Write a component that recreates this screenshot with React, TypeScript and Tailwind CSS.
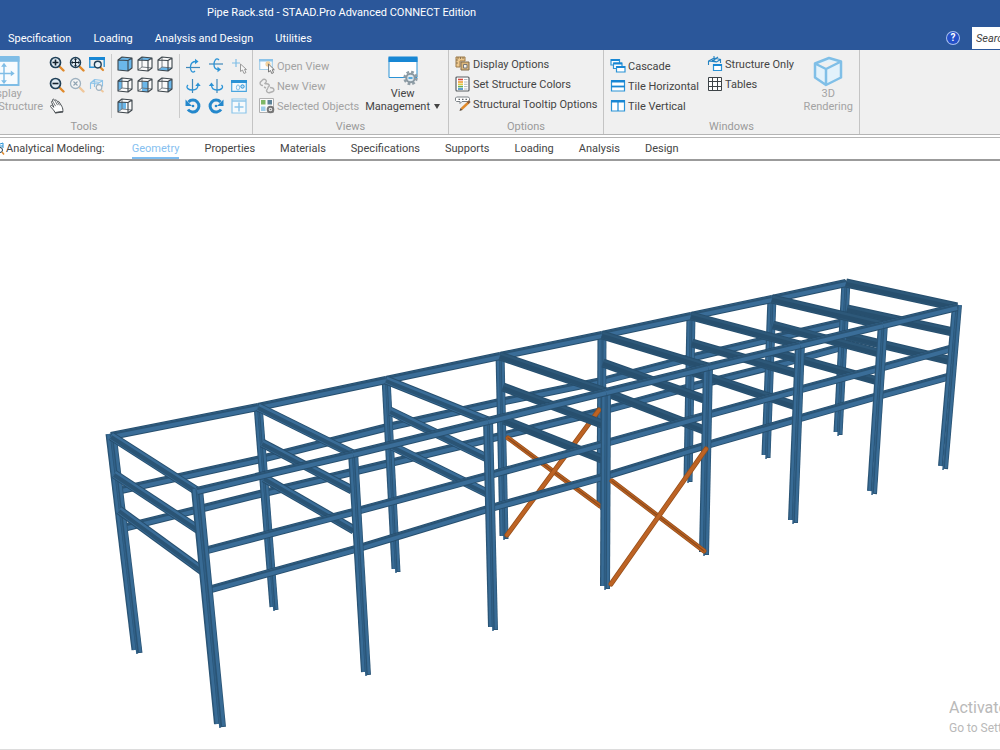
import type { ReactNode } from "react";

type Point = [number, number];

const BLUE = "#2b93d6";
const PALE = "#7fbde6";
const INK = "#3d4347";
const ORANGE = "#e08a2c";

/** 16px icon frame shared by the small ribbon commands. */
function Icon({ children }: { children: ReactNode }) {
  return (
    <svg viewBox="0 0 16 16" fill="none" aria-hidden="true" className="h-4 w-4 shrink-0">
      {children}
    </svg>
  );
}

function Magnifier({ sign, faded = false }: { sign: string; faded?: boolean }) {
  return (
    <Icon>
      <path
        d="M11 11l3.500 3.500"
        stroke={faded ? "#f0c79a" : ORANGE}
        strokeWidth="2.4"
        strokeLinecap="round"
      />
      <circle
        cx="6.5"
        cy="6.5"
        r="5"
        fill={faded ? "#f4f4f4" : "#dfeaf2"}
        stroke={faded ? "#9fb2c0" : "#1f3f57"}
        strokeWidth={faded ? 1.3 : 1.7}
      />
      <path d={sign} stroke={faded ? "#8fa3b2" : "#14222e"} strokeWidth={faded ? 1.1 : 1.6} />
    </Icon>
  );
}

function ZoomWindowIcon() {
  return (
    <Icon>
      <path d="M.8 2v9.2h5M15.2 2v9" stroke={BLUE} strokeWidth="1.4" />
      <path d="M0 1h16v3H0z" fill="#1887d4" />
      <path d="M11.5 11.5L14 14" stroke={ORANGE} strokeWidth="2.2" strokeLinecap="round" />
      <circle cx="8.8" cy="8.6" r="3.4" fill="#eaf3f9" stroke="#1f3f57" strokeWidth="1.4" />
    </Icon>
  );
}

function FrameZoomIcon() {
  return (
    <Icon>
      <path
        d="M1.500 12V6l4-3.500 8 1v6M1.500 6l7 1 5-3.500M5.500 2.500V10M8.500 7v2M3 4.500l8 1"
        stroke="#8cc3e8"
        strokeWidth="1.1"
      />
      <path d="M12 13l2.500 2" stroke="#f0c79a" strokeWidth="1.8" />
      <circle cx="10" cy="10.500" r="2.800" fill="#f4f4f4" stroke="#9fb2c0" strokeWidth="1.2" />
    </Icon>
  );
}

function HandIcon() {
  return (
    <Icon>
      <path
        d="M6.2 14.8C5 12 2.6 10.2 1.6 8.6c-.5-1 .7-1.7 1.5-.9l1.8 1.6L2.6 4.2c-.4-1.1.9-1.6 1.4-.6L3.6 2c0-1 1.200-1.300 1.600-.3l.7 1c.1-1 1.400-1.200 1.800-.2l.8 1.300c.5-.7 1.300-.4 1.700.3l2.600 4.200c1.200 2 1 3.600 1.200 5.400-2 .2-4.600.6-7.800 1.100z"
        fill="#fff"
        stroke="#4b5054"
        strokeLinejoin="round"
      />
      <path d="M4.300 4.200l2.300 4M6.200 3.200l2.400 4M8.600 4l1.900 3.300" stroke="#4b5054" strokeWidth=".8" />
      <path d="M6.200 14.800l7.800-1.100" stroke="#4b5054" strokeWidth="1.500" />
    </Icon>
  );
}

const cubeFaces: { label: string; face: string }[] = [
  { label: "Isometric view", face: "M1 4l4-3 10 1v10l-4 3-10-1z" },
  { label: "View from top", face: "M1 4l4-3 10 1-4 2.500z" },
  { label: "View from bottom", face: "M1 14l4-3 10 1-4 3z" },
  { label: "View from left", face: "M1 4l4-3v10l-4 3z" },
  { label: "View from front", face: "M5 5h6v10l-6-.6z" },
  { label: "View from right", face: "M11 4.500L15 2v10l-4 3z" },
  { label: "View from back", face: "M1 4l8 .4v6.400L5 11l-4 3z" },
];

function CubeIcon({ face, solid }: { face: string; solid: boolean }) {
  return (
    <Icon>
      <path d="M1 4l4-3 10 1v10l-4 3-10-1z" fill="#fafafa" />
      <path d={face} fill="#6bb7ea" />
      {solid ? null : <path d="M5 1v10l10 1M5 11l-4 3" stroke="#6b7379" strokeWidth=".9" />}
      <path
        d="M1 4l4-3 10 1v10l-4 3-10-1zM1 4l10 .5L15 2M11 4.500V15"
        stroke="#3d454b"
        strokeWidth="1.100"
        strokeLinejoin="round"
      />
    </Icon>
  );
}

const rotateIcons: { label: string; art: ReactNode }[] = [
  {
    label: "Rotate up",
    art: (
      <>
        <path d="M1 9.500h14" stroke="#3f88ba" strokeWidth="1.200" />
        <path d="M10 13c-3 3-5-1-4.500-4.500C5.800 5 7.500 3.500 11 3.500" stroke={BLUE} strokeWidth="1.300" />
        <path d="M10 .8l3.500 2.700L10 6.200z" fill={BLUE} />
      </>
    ),
  },
  {
    label: "Rotate down",
    art: (
      <>
        <path d="M1 6h14" stroke="#3f88ba" strokeWidth="1.200" />
        <path d="M11 2C8-1 6 3 6 6.500s2 5 4.500 5" stroke={BLUE} strokeWidth="1.300" />
        <path d="M9.500 8.800l3.500 2.700-3.500 2.700z" fill={BLUE} />
      </>
    ),
  },
  {
    label: "Pick rotation point",
    art: (
      <>
        <path d="M5 1v8M1 5h8" stroke={PALE} strokeWidth="1.200" />
        <path d="M9.500 6v7.500l2-1.500 1.500 3.500 2-1-1.500-3h2z" fill="#f6f6f6" stroke="#9a9a9a" />
      </>
    ),
  },
  {
    label: "Rotate left",
    art: (
      <>
        <path d="M7.500 1v14" stroke="#3f88ba" strokeWidth="1.200" />
        <path d="M3 7c-3 3 1 5 4.500 5s5.500-1.500 5.500-5" stroke={BLUE} strokeWidth="1.300" />
        <path d="M10.300 8L13 4.500 15.700 8z" fill={BLUE} />
      </>
    ),
  },
  {
    label: "Rotate right",
    art: (
      <>
        <path d="M9 1v14" stroke="#3f88ba" strokeWidth="1.200" />
        <path d="M13.500 7c3 3-1 5-4.500 5S3.500 10.500 3.500 7" stroke={BLUE} strokeWidth="1.300" />
        <path d="M.8 8l2.700-3.500L6.200 8z" fill={BLUE} />
      </>
    ),
  },
  {
    label: "Toggle angle window",
    art: (
      <>
        <path d="M.700 3.500h14.600v9.800H.700z" fill="#f4f9fc" stroke="#4aa5de" strokeWidth="1.200" />
        <path d="M0 2h16v3H0z" fill="#2b93d6" />
        <ellipse cx="7" cy="9.500" rx="1.600" ry="2.600" stroke={PALE} />
        <circle cx="11.500" cy="8.500" r="1.700" fill="#bfe0f5" stroke="#2b93d6" />
      </>
    ),
  },
  {
    label: "Spin left",
    art: (
      <>
        <path d="M3.500 4A6 6 0 1 1 3 11.500" stroke="#2488cc" strokeWidth="3" />
        <path d="M.5 1.500v6.500h6.500z" fill="#2488cc" />
        <circle cx="8" cy="8" r="1.300" fill="#2488cc" />
      </>
    ),
  },
  {
    label: "Spin right",
    art: (
      <>
        <path d="M12.500 4A6 6 0 1 0 13 11.500" stroke="#2488cc" strokeWidth="3" />
        <path d="M15.500 1.500v6.500H9z" fill="#2488cc" />
        <circle cx="8" cy="8" r="1.300" fill="#2488cc" />
      </>
    ),
  },
  {
    label: "Fit window",
    art: (
      <>
        <path d="M1 1h14v14H1z" fill="#f6fafc" stroke="#8cc5ea" strokeWidth="1.200" />
        <path d="M1 3h14" stroke="#8cc5ea" strokeWidth="1.500" />
        <path d="M8 4.500v9M3.500 9h9" stroke="#8cc5ea" strokeWidth="1.500" />
      </>
    ),
  },
];

function IconButton({ label, children }: { label: string; children: ReactNode }) {
  return (
    <button type="button" aria-label={label} className="h-4 w-4">
      {children}
    </button>
  );
}

function Command({
  icon,
  children,
  disabled = false,
}: {
  icon: ReactNode;
  children: ReactNode;
  disabled?: boolean;
}) {
  return (
    <button
      type="button"
      disabled={disabled}
      className="flex h-5 items-center gap-0.5 whitespace-nowrap text-[#444] disabled:text-[#a3a3a3]"
    >
      {icon}
      <span className="pt-0.5">{children}</span>
    </button>
  );
}

/** Ribbon group: commands on top, caption centred underneath. */
function Group({
  title,
  className,
  children,
}: {
  title: string;
  className: string;
  children: ReactNode;
}) {
  return (
    <section className={`flex shrink-0 flex-col border-r border-[#c4c4c4] ${className}`}>
      <div className="flex flex-1">{children}</div>
      <h2 className="h-4 pt-0.5 text-center leading-[14px] text-[#9a9a9a]">{title}</h2>
    </section>
  );
}

function Separator() {
  return <div className="mt-1 h-16 w-px shrink-0 bg-[#cbcbcb]" />;
}

function TileIcon({ vertical = false }: { vertical?: boolean }) {
  return (
    <Icon>
      <path d="M1.500 3h13v10h-13z" fill="#fff" stroke={BLUE} strokeWidth="1.200" />
      <path d="M1 2h14v2.500H1z" fill="#1887d4" />
      <path
        d={vertical ? "M8 3v10" : "M1 8.500h14"}
        stroke="#1887d4"
        strokeWidth={vertical ? 1.2 : 1.8}
      />
    </Icon>
  );
}

function Ribbon() {
  return (
    <div className="flex h-[85px] shrink-0 overflow-hidden border-b border-[#b5b5b5] bg-[#f0f0f0]">
      <Group title="Tools" className="-ml-[84px] w-[337px]">
        <button
          type="button"
          disabled
          className="ml-11 flex w-[88px] flex-col items-center whitespace-nowrap pt-1.5 leading-[13px] text-[#a3a3a3]"
        >
          <svg viewBox="0 0 32 32" fill="none" aria-hidden="true" className="h-[31px] w-8 shrink-0">
            <path d="M1 2h30v28H1z" fill="#f7fbfe" stroke={PALE} strokeWidth="2" />
            <path d="M0 0h32v6H0z" fill={PALE} />
            <path d="M16 9v18M7 18h18" stroke={PALE} strokeWidth="1.500" />
            <path d="M16 7l-3 4h6zM16 29l-3-4h6zM5 18l4-3v6zM27 18l-4-3v6z" fill={PALE} />
          </svg>
          <span>Display</span>
          <span>Whole Structure</span>
        </button>
        <div className="grid grid-cols-3 content-start gap-x-1 gap-y-[5px] pl-px pt-1.5">
          <IconButton label="Zoom in">
            <Magnifier sign="M3.500 6.500h6M6.500 3.500v6" />
          </IconButton>
          <IconButton label="Zoom extents">
            <Icon>
              <path d="M11 11l3.500 3.500" stroke={ORANGE} strokeWidth="2.4" strokeLinecap="round" />
              <circle cx="6.500" cy="6.500" r="5" fill="#dfeaf2" stroke="#1f3f57" strokeWidth="1.500" />
              <path d="M3 6.500h7M6.500 3v7" stroke="#14222e" strokeWidth="1.100" />
              <path
                d="M6.500 2l1.500 1.800H5zM6.500 11L5 9.200h3zM2 6.500L3.800 5v3zM11 6.500L9.200 8V5z"
                fill="#14222e"
              />
            </Icon>
          </IconButton>
          <IconButton label="Zoom window">
            <ZoomWindowIcon />
          </IconButton>
          <IconButton label="Zoom out">
            <Magnifier sign="M3.500 6.500h6" />
          </IconButton>
          <IconButton label="Zoom previous">
            <Magnifier sign="M4.500 4.500l4 4M8.500 4.500l-4 4" faded />
          </IconButton>
          <IconButton label="Zoom structure">
            <FrameZoomIcon />
          </IconButton>
          <IconButton label="Pan">
            <HandIcon />
          </IconButton>
        </div>
        <div className="pl-1.5 pr-[5px]">
          <Separator />
        </div>
        <div className="grid grid-cols-3 content-start gap-x-1 gap-y-[5px] pt-1.5">
          {cubeFaces.map(({ label, face }, i) => (
            <IconButton key={label} label={label}>
              <CubeIcon face={face} solid={i === 0} />
            </IconButton>
          ))}
        </div>
        <div className="pl-1.5 pr-[5px]">
          <Separator />
        </div>
        <div className="grid grid-cols-3 content-start gap-x-[7px] gap-y-1 pt-2">
          {rotateIcons.map(({ label, art }) => (
            <IconButton key={label} label={label}>
              <Icon>{art}</Icon>
            </IconButton>
          ))}
        </div>
      </Group>

      <Group title="Views" className="w-[196px]">
        <div className="flex flex-col pl-1.5 pt-1.5">
          <Command
            disabled
            icon={
              <Icon>
                <path d="M.700 2h12.600v9.500H.700z" fill="#fbfdfe" stroke="#a5cfe9" strokeWidth="1.200" />
                <path d="M0 1h14v2.500H0z" fill="#8cc3e8" />
                <path d="M9 3v6M6 6h6M7 4l4 4M11 4L7 8" stroke="#f3cf97" strokeWidth="1.200" />
                <path d="M9.500 6v8l2-1.500 1.200 3 1.800-.8-1.200-3h2z" fill="#fafafa" stroke="#777" />
              </Icon>
            }
          >
            Open View
          </Command>
          <Command
            disabled
            icon={
              <Icon>
                <path
                  d="M4 7.500C1.500 7.500.500 5.500 1.500 4L4 1.500c2-1 4 .8 3 2.700L5.500 6M6 5.500l3 .5c2 1 1.500 3-.5 3.500M9 10L7.500 12.500c0 2 2 2.500 3.500 2l3-1c1.500-1 1-3-.5-3.500L11 9.500M5 9l2 1"
                  stroke="#b0b0b0"
                  strokeWidth="1.400"
                />
              </Icon>
            }
          >
            New View
          </Command>
          <Command
            disabled
            icon={
              <Icon>
                <path d="M.500.500h14v14H.500z" fill="#fafafa" stroke="#b0b0b0" />
                <path d="M2 2h4.500v4.500H2z" fill="#7db765" />
                <path d="M8.500 2H13v4.500H8.500z" fill="#5d8398" />
                <path d="M2 8.500h4.500V13H2z" fill="#9ccce9" />
                <circle cx="11.500" cy="11.500" r="2.800" fill="#eee" stroke="#777" strokeWidth="2" />
                <circle cx="11.500" cy="11.500" r=".8" fill="#777" />
              </Icon>
            }
          >
            Selected Objects
          </Command>
        </div>
        <button
          type="button"
          className="ml-auto mr-2 flex flex-col items-center whitespace-nowrap pt-1.5 leading-[13px] text-[#444]"
        >
          <svg viewBox="0 0 30 30" fill="none" aria-hidden="true" className="h-[31px] w-[30px]">
            <path d="M1 1h28v20H1z" fill="#fff" stroke={BLUE} />
            <path d="M.500 0h29v5.500H.500z" fill="#1887d4" />
            <circle cx="22.500" cy="21.500" r="6" stroke="#8f9da6" strokeWidth="2.500" strokeDasharray="2.700 2" />
            <circle cx="22.500" cy="21.500" r="4.200" fill="#dfe9ef" stroke="#8a98a1" strokeWidth="2" />
            <path d="M20.500 21.500h4" stroke={BLUE} strokeWidth="1.500" />
          </svg>
          <span>View</span>
          <span className="flex items-center gap-1">
            Management
            <svg viewBox="0 0 6 5" aria-hidden="true" className="h-[5px] w-1.5">
              <path d="M0 0h6L3 5z" fill="#444" />
            </svg>
          </span>
        </button>
      </Group>

      <Group title="Options" className="w-[155px]">
        <div className="flex flex-col pl-1.5 pt-1">
          <Command
            icon={
              <Icon>
                <path d="M1 1h9v4H5v6H1z" fill="#edc88e" stroke="#9c7a4b" />
                <path d="M6 6h8v8H6z" fill="#dcb77c" stroke="#806a4b" />
                <path d="M8.500 8.500h3.500V12H8.500z" fill="#f5f1ea" stroke="#777" />
                <path d="M3 1v2M5.500 1v2M8 1v2M1 4h2M1 7h2" stroke="#7a6547" strokeWidth=".8" />
              </Icon>
            }
          >
            Display Options
          </Command>
          <Command
            icon={
              <Icon>
                <rect x="1" y="1" width="13" height="14" rx="1" fill="#fff" stroke="#575d61" strokeWidth="1.200" />
                <path d="M3 3.500h5" stroke="#d9473d" strokeWidth="1.600" />
                <path d="M3 6h5" stroke="#ec9a34" strokeWidth="1.600" />
                <path d="M3 8.300h5" stroke="#e3c93e" strokeWidth="1.600" />
                <path d="M3 10.600h5" stroke="#62ad57" strokeWidth="1.600" />
                <path d="M3 13h5" stroke="#3a86c5" strokeWidth="1.600" />
                <path d="M9 3.500h3.500M9 6h3.500M9 8.300h3.500M9 10.600h3.500M9 13h3.500" stroke="#b4b9bd" />
              </Icon>
            }
          >
            Set Structure Colors
          </Command>
          <Command
            icon={
              <Icon>
                <path
                  d="M1.500 1h12l1 1.500V4l-1 1.500H7L5 7.500v-2H1.500L.500 4.500V2z"
                  fill="#fff"
                  stroke="#7b8186"
                />
                <path d="M3.500 3.300h1.500M7 3.300h1.500M10.500 3.300H12" stroke="#5b6166" strokeWidth="1.200" />
                <path d="M6.500 13l7-6.500" stroke={ORANGE} strokeWidth="2.400" />
                <path d="M12.800 7.200l2-2" stroke="#8a5b37" strokeWidth="2.400" />
                <path d="M4.500 15l1-3 2 2z" fill="#5c4a38" />
              </Icon>
            }
          >
            Structural Tooltip Options
          </Command>
        </div>
      </Group>

      <Group title="Windows" className="w-64">
        <div className="flex w-[103px] flex-col pl-1.5 pt-1.5">
          <Command
            icon={
              <Icon>
                <g fill="#fff" stroke={BLUE} strokeWidth="1.200">
                  <path d="M1 1.500h8.500V7H1z" />
                  <path d="M3.500 5H12v5.500H3.500z" />
                  <path d="M6.500 8.500H15V14H6.500z" />
                </g>
                <path d="M1 2h8.500M3.500 5.500H12M6.500 9H15" stroke="#1887d4" strokeWidth="1.800" />
              </Icon>
            }
          >
            Cascade
          </Command>
          <Command icon={<TileIcon />}>Tile Horizontal</Command>
          <Command icon={<TileIcon vertical />}>Tile Vertical</Command>
        </div>
        <div className="flex flex-col pt-1">
          <Command
            icon={
              <Icon>
                <path
                  d="M1.500 9V5L7 2l6.500 1.500V7M1.500 5l8 1 4-2.500M7 0v6M4 3.500l5.500 2.500M11 1L5 5.500"
                  stroke="#2583c2"
                  strokeWidth="1.100"
                />
                <path d="M6.500 8.500h8v6h-8z" fill="#fff" stroke={BLUE} strokeWidth="1.200" />
                <path d="M6 9h9" stroke="#1887d4" strokeWidth="2" />
              </Icon>
            }
          >
            Structure Only
          </Command>
          <Command
            icon={
              <Icon>
                <path
                  d="M1.500 1.500h13v13h-13zM5.500 1.500v13M10.500 1.500v13M1.500 5.500h13M1.500 10.500h13"
                  fill="#fdfdfd"
                  stroke={INK}
                />
              </Icon>
            }
          >
            Tables
          </Command>
        </div>
        <button
          type="button"
          disabled
          className="ml-auto mr-1.5 flex flex-col items-center whitespace-nowrap pt-1.5 leading-[13px] text-[#a3a3a3]"
        >
          <svg viewBox="0 0 30 30" fill="none" aria-hidden="true" className="h-[31px] w-[30px]">
            <path
              d="M2 7l14-5.500L28 5v16L13 28.500 2 21zM2 7l11 5.500L28 5M13 12.500v16"
              fill="#e3f2fb"
              stroke="#80bfe7"
              strokeWidth="2.500"
              strokeLinejoin="round"
            />
          </svg>
          <span>3D</span>
          <span>Rendering</span>
        </button>
      </Group>
    </div>
  );
}

const workflowPages = [
  "Geometry",
  "Properties",
  "Materials",
  "Specifications",
  "Supports",
  "Loading",
  "Analysis",
  "Design",
];

function WorkflowBar() {
  return (
    <nav className="mt-0.5 flex h-6 shrink-0 items-center overflow-hidden border-t border-b-2 border-t-[#b5b5b5] border-b-[#9b9b9b] bg-white text-[#444]">
      <svg viewBox="0 0 6 14" fill="none" aria-hidden="true" className="h-3.5 w-1.5 shrink-0">
        <path d="M0 2l3-1v5M0 4h3" stroke={BLUE} />
        <circle cx="0" cy="8" r="2.500" stroke="#1f3f57" />
        <path d="M2 10l2 2.500" stroke={ORANGE} strokeWidth="1.500" />
      </svg>
      <span className="shrink-0 whitespace-nowrap leading-4">Analytical Modeling:</span>
      <div className="ml-[27px] flex gap-[25px]">
        {workflowPages.map((page) => (
          <a
            key={page}
            href="#"
            aria-current={page === "Geometry" ? "page" : undefined}
            className="border-y-2 border-transparent leading-4 aria-[current=page]:border-b-[#7fbdf0] aria-[current=page]:text-[#86bff0]"
          >
            {page}
          </a>
        ))}
      </div>
    </nav>
  );
}

// Screen-space nodes of the rack, one entry per frame. Each column lists its
// top, the two beam levels, and the foot.
const backColumns: Point[][] = [
  [[111, 436], [121, 490], [127, 527], [137, 652]],
  [[258, 407], [261, 459], [264, 493], [274, 609]],
  [[386, 380], [388, 427], [390, 463], [396, 571]],
  [[500, 356], [500, 402], [501, 436], [504, 538]],
  [[602, 335], [602, 381], [602, 411], [601, 508]],
  [[691, 316], [690, 358], [690, 387], [688, 481]],
  [[772, 299], [770, 339], [769, 367], [766, 457]],
  [[846, 283], [844, 322], [842, 347], [838, 434]],
];

const frontColumns: Point[][] = [
  [[197, 491], [204, 551], [208, 590], [220, 726]],
  [[353, 454], [357, 511], [359, 548], [366, 674]],
  [[488, 421], [490, 475], [491, 508], [493, 629]],
  [[606, 392], [606, 443], [606, 476], [605, 588]],
  [[708, 367], [707, 415], [707, 445], [704, 554]],
  [[800, 345], [798, 390], [797, 419], [793, 522]],
  [[883, 325], [880, 368], [878, 396], [872, 493]],
  [[957, 307], [953, 348], [951, 376], [943, 468]],
];

const crossBeams: [Point, Point][] = [
  [[114, 474], [202, 532]],
  [[119, 510], [204, 572]],
  [[262, 443], [352, 490]],
  [[264, 478], [354, 530]],
  [[390, 411], [487, 458]],
  [[392, 446], [487, 493]],
  [[503, 387], [602, 424]],
  [[504, 420], [602, 459]],
  [[603, 363], [704, 399]],
  [[605, 392], [704, 430]],
  [[692, 343], [798, 374]],
  [[693, 372], [796, 406]],
  [[773, 325], [879, 353]],
  [[773, 352], [878, 381]],
  [[847, 309], [953, 332]],
  [[847, 336], [952, 361]],
];

function toPath([a, b]: [Point, Point]) {
  return `M${a[0]} ${a[1]}L${b[0]} ${b[1]}`;
}

/** Rolled steel beam: dark web between two lit flanges. */
function Beam({ from, to, cross = false }: { from: Point; to: Point; cross?: boolean }) {
  const d = toPath([from, to]);
  const shade = cross && from[0] > 480;
  return (
    <g>
      <path d={d} stroke="#274f6e" strokeWidth={cross ? 9 : 8} />
      <path d={d} stroke={shade ? "#2d5879" : "#3a6d98"} strokeWidth={cross ? 7 : 6} />
      <path
        d={d}
        stroke={shade ? "#274f6e" : "#2a5475"}
        strokeWidth={cross ? 4 : 2}
        transform={cross ? "translate(0 1)" : "translate(0 -2)"}
      />
    </g>
  );
}

function Column({ nodes, width }: { nodes: Point[]; width: number }) {
  const top = nodes[0];
  const foot = nodes[nodes.length - 1];
  const q = width / 4;
  const shaft = (dx: number, drop: number): string =>
    toPath([
      [top[0] + dx, top[1] - 2],
      [foot[0] + dx, foot[1] + drop],
    ]);
  return (
    <g>
      <path d={shaft(-q, -2)} stroke="#2a5475" strokeWidth={width / 2} />
      <path d={shaft(q, 1)} stroke="#2a5475" strokeWidth={width / 2} />
      <path d={shaft(-q, -2)} stroke="#386b95" strokeWidth={q} />
      <path d={shaft(q * 1.2, 0)} stroke="#386b95" strokeWidth={q} />
      <path d={shaft(0, 2)} stroke="#2f5f86" strokeWidth="1.500" />
    </g>
  );
}

function Brace({ from, to, dark = false }: { from: Point; to: Point; dark?: boolean }) {
  const d = toPath([from, to]);
  return (
    <g strokeLinecap="round">
      <path d={d} stroke="#96501c" strokeWidth="5" />
      <path d={d} stroke="#bd6324" strokeWidth="3.500" />
      {dark ? <path d={d} stroke="#8f4c1c" strokeWidth="1.500" /> : null}
    </g>
  );
}

/** Beams joining neighbouring columns of a row at one level. */
function Run({ columns, level }: { columns: Point[][]; level: number }) {
  return (
    <>
      {columns.slice(1).map((column, i) => (
        <Beam key={i} from={columns[i][level]} to={column[level]} />
      ))}
    </>
  );
}

function PipeRackModel() {
  return (
    <svg
      viewBox="0 161 1000 588"
      fill="none"
      role="img"
      aria-label="Pipe rack model"
      className="block w-full"
    >
      <Run columns={backColumns} level={2} />
      <Run columns={backColumns} level={1} />
      {backColumns.map((nodes, i) => (
        <Column key={i} nodes={nodes} width={i === 0 ? 11 : 9} />
      ))}
      <Brace from={[508, 438]} to={[600, 506]} dark />
      <Brace from={[507, 535]} to={[599, 410]} />
      <Run columns={backColumns} level={0} />
      {crossBeams.map(([from, to], i) => (
        <Beam key={i} from={from} to={to} cross />
      ))}
      {backColumns.map((column, i) => (
        <Beam key={i} from={column[0]} to={frontColumns[i][0]} cross />
      ))}
      <Run columns={frontColumns} level={2} />
      <Run columns={frontColumns} level={1} />
      {/* Near columns overlap the lower beam ends, the top rail caps them */}
      {frontColumns.map((nodes, i) => (
        <Column key={i} nodes={nodes} width={i === 0 ? 12 : 10} />
      ))}
      <Run columns={frontColumns} level={0} />
      <Brace from={[612, 481]} to={[704, 551]} dark />
      <Brace from={[611, 584]} to={[706, 449]} />
    </svg>
  );
}

export default function App() {
  return (
    <div className="flex min-h-screen flex-col overflow-hidden border-b border-[#dcdcdc] bg-white font-[Roboto,'Open_Sans',sans-serif] text-[11px]">
      <header className="flex h-[50px] shrink-0 flex-col bg-[#2b579a] text-white">
        <h1 className="h-[26px] whitespace-nowrap pl-[207px] leading-[26px]">
          Pipe Rack.std - STAAD.Pro Advanced CONNECT Edition
        </h1>
        <div className="flex flex-1 items-center">
          <nav className="flex gap-[22px] whitespace-nowrap pl-2 pt-0.5">
            <a href="#">Specification</a>
            <a href="#">Loading</a>
            <a href="#">Analysis and Design</a>
            <a href="#">Utilities</a>
          </nav>
          <button
            type="button"
            aria-label="Help"
            className="ml-auto mr-[13px] flex h-3 w-3 items-center justify-center rounded-full bg-[#2450c8] text-[10px] font-bold leading-3 ring-1 ring-[#a9c0ee]"
          >
            ?
          </button>
          <input
            type="text"
            aria-label="Search"
            placeholder="Search"
            className="h-[22px] w-7 bg-white pl-1 italic text-[#444] placeholder:text-[#444]"
          />
        </div>
      </header>
      <Ribbon />
      <WorkflowBar />
      <main className="relative flex-1">
        <PipeRackModel />
        <aside className="absolute bottom-3 right-0 w-[51px] overflow-hidden whitespace-nowrap text-[#b9b9b9]">
          <p className="text-[16px] leading-[22px]">Activate Windows</p>
          <p className="text-[12px] leading-[18px]">Go to Settings to activate Windows.</p>
        </aside>
      </main>
    </div>
  );
}
